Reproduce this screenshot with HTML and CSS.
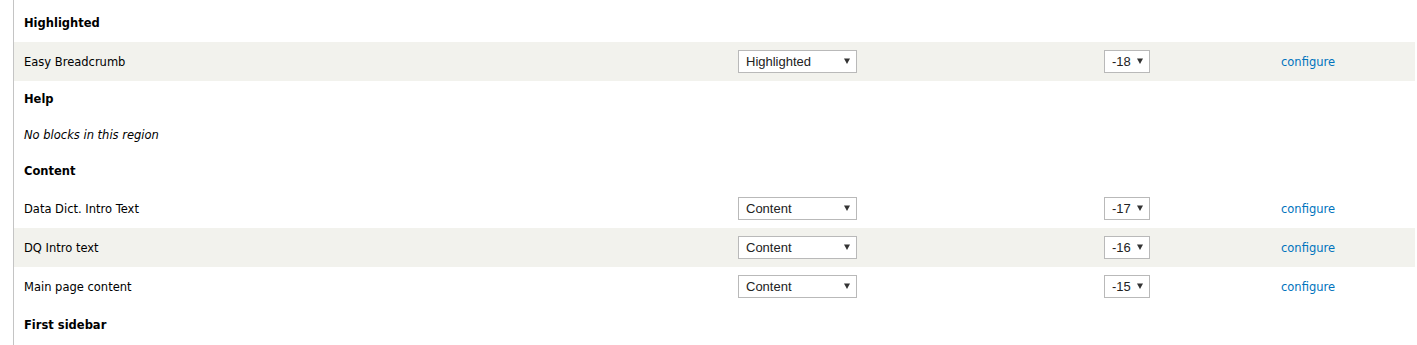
FILE: index.html
```html
<!DOCTYPE html>
<html lang="en">
<head>
<meta charset="utf-8">
<title>Block layout</title>
<link rel="stylesheet" href="styles.css">
</head>
<body>
<div class="page">
  <table class="blocks">
    <colgroup>
      <col class="col-name">
      <col class="col-region">
      <col class="col-weight">
      <col class="col-ops">
    </colgroup>
    <tbody>
      <tr class="region-title first"><td colspan="4">Highlighted</td></tr>
      <tr class="block even">
        <td>Easy Breadcrumb</td>
        <td><span class="select region-select"><select><option>Highlighted</option></select><svg class="arrow" viewBox="0 0 6 6" width="6" height="6"><polygon points="0,0.5 6,0.5 3,6"/></svg></span></td>
        <td><span class="select weight-select"><select><option>-18</option></select><svg class="arrow" viewBox="0 0 6 6" width="6" height="6"><polygon points="0,0.5 6,0.5 3,6"/></svg></span></td>
        <td><a class="op" href="#">configure</a></td>
      </tr>
      <tr class="region-title short"><td colspan="4">Help</td></tr>
      <tr class="region-message"><td colspan="4"><em>No blocks in this region</em></td></tr>
      <tr class="region-title"><td colspan="4">Content</td></tr>
      <tr class="block">
        <td>Data Dict. Intro Text</td>
        <td><span class="select region-select"><select><option>Content</option></select><svg class="arrow" viewBox="0 0 6 6" width="6" height="6"><polygon points="0,0.5 6,0.5 3,6"/></svg></span></td>
        <td><span class="select weight-select"><select><option>-17</option></select><svg class="arrow" viewBox="0 0 6 6" width="6" height="6"><polygon points="0,0.5 6,0.5 3,6"/></svg></span></td>
        <td><a class="op" href="#">configure</a></td>
      </tr>
      <tr class="block even">
        <td>DQ Intro text</td>
        <td><span class="select region-select"><select><option>Content</option></select><svg class="arrow" viewBox="0 0 6 6" width="6" height="6"><polygon points="0,0.5 6,0.5 3,6"/></svg></span></td>
        <td><span class="select weight-select"><select><option>-16</option></select><svg class="arrow" viewBox="0 0 6 6" width="6" height="6"><polygon points="0,0.5 6,0.5 3,6"/></svg></span></td>
        <td><a class="op" href="#">configure</a></td>
      </tr>
      <tr class="block">
        <td>Main page content</td>
        <td><span class="select region-select"><select><option>Content</option></select><svg class="arrow" viewBox="0 0 6 6" width="6" height="6"><polygon points="0,0.5 6,0.5 3,6"/></svg></span></td>
        <td><span class="select weight-select"><select><option>-15</option></select><svg class="arrow" viewBox="0 0 6 6" width="6" height="6"><polygon points="0,0.5 6,0.5 3,6"/></svg></span></td>
        <td><a class="op" href="#">configure</a></td>
      </tr>
      <tr class="region-title"><td colspan="4">First sidebar</td></tr>
    </tbody>
  </table>
</div>
</body>
</html>
```
FILE: styles.css
```css
html, body {
  margin: 0;
  padding: 0;
  background: #fff;
}

body {
  font-family: "DejaVu Sans", Verdana, sans-serif;
  font-size: 11.5px;
  color: #000;
  height: 345px;
  overflow: hidden;
}

.page {
  margin: 0 2px 0 13px;
  border-left: 1px solid #c4c4c4;
  min-height: 345px;
  padding-top: 4px;
  box-sizing: border-box;
}

.blocks {
  width: 100%;
  table-layout: fixed;
  border-collapse: collapse;
  border-spacing: 0;
}

.col-name { width: 714px; }
.col-region { width: 366px; }
.col-weight { width: 177px; }

.blocks td {
  padding: 0 10px;
  vertical-align: middle;
}

.region-title td {
  height: 37px;
  font-weight: bold;
}

.region-title.first td { height: 38px; }
.region-title.short td { height: 36px; }

.region-message td {
  height: 35px;
}

.region-message em {
  font-style: italic;
}

.block td {
  height: 39px;
}

.block.even {
  background: #f2f2ed;
}

.select {
  position: relative;
  display: inline-block;
  vertical-align: middle;
}

.select select {
  appearance: none;
  -webkit-appearance: none;
  display: block;
  box-sizing: border-box;
  height: 23px;
  margin: 0;
  padding: 0 18px 0 7px;
  border: 1px solid #b9b9b9;
  border-radius: 0;
  background: #fff;
  font-family: "Liberation Sans", Arial, sans-serif;
  font-size: 13px;
  color: #222;
  outline: none;
}

.region-select select { width: 119px; }
.weight-select select { width: 46px; }

.select .arrow {
  position: absolute;
  right: 7px;
  top: 8px;
  fill: #333;
  pointer-events: none;
}

.op {
  color: #0074bd;
  text-decoration: none;
}
```
